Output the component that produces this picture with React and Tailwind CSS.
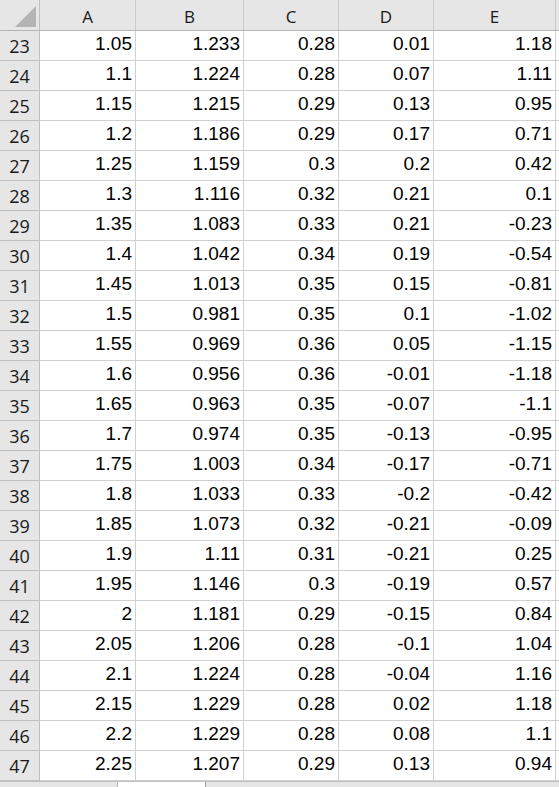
import React from "react";

const rows = [
  [23, "1.05", "1.233", "0.28", "0.01", "1.18"],
  [24, "1.1", "1.224", "0.28", "0.07", "1.11"],
  [25, "1.15", "1.215", "0.29", "0.13", "0.95"],
  [26, "1.2", "1.186", "0.29", "0.17", "0.71"],
  [27, "1.25", "1.159", "0.3", "0.2", "0.42"],
  [28, "1.3", "1.116", "0.32", "0.21", "0.1"],
  [29, "1.35", "1.083", "0.33", "0.21", "-0.23"],
  [30, "1.4", "1.042", "0.34", "0.19", "-0.54"],
  [31, "1.45", "1.013", "0.35", "0.15", "-0.81"],
  [32, "1.5", "0.981", "0.35", "0.1", "-1.02"],
  [33, "1.55", "0.969", "0.36", "0.05", "-1.15"],
  [34, "1.6", "0.956", "0.36", "-0.01", "-1.18"],
  [35, "1.65", "0.963", "0.35", "-0.07", "-1.1"],
  [36, "1.7", "0.974", "0.35", "-0.13", "-0.95"],
  [37, "1.75", "1.003", "0.34", "-0.17", "-0.71"],
  [38, "1.8", "1.033", "0.33", "-0.2", "-0.42"],
  [39, "1.85", "1.073", "0.32", "-0.21", "-0.09"],
  [40, "1.9", "1.11", "0.31", "-0.21", "0.25"],
  [41, "1.95", "1.146", "0.3", "-0.19", "0.57"],
  [42, "2", "1.181", "0.29", "-0.15", "0.84"],
  [43, "2.05", "1.206", "0.28", "-0.1", "1.04"],
  [44, "2.1", "1.224", "0.28", "-0.04", "1.16"],
  [45, "2.15", "1.229", "0.28", "0.02", "1.18"],
  [46, "2.2", "1.229", "0.28", "0.08", "1.1"],
  [47, "2.25", "1.207", "0.29", "0.13", "0.94"],
];

const colW = ["w-[96px]", "w-[108px]", "w-[95px]", "w-[95px]", "w-[122px]"];
const letters = ["A", "B", "C", "D", "E"];

export default function App() {
  return (
    <div className="w-[559px] h-[787px] overflow-hidden bg-white flex flex-col">
      {/* header */}
      <div className="flex h-[31px] shrink-0 bg-[#e6e6e6] border-b border-[#b5b5b5]">
        <div className="w-[40px] shrink-0 border-r border-[#c0c0c0] relative">
          <svg className="absolute left-0 top-0" width="39" height="30" viewBox="0 0 39 30">
            <polygon points="15,27 36,27 36,6" fill="#b4b4b4" />
          </svg>
        </div>
        {letters.map((l, i) => (
          <div
            key={l}
            className={`${colW[i]} shrink-0 border-r border-[#cccccc] flex items-end justify-center pb-[2px] text-[17px] leading-[22px] text-[#1a1a1a] font-['Open_Sans',sans-serif]`}
          >
            {l}
          </div>
        ))}
        <div className="flex-1" />
      </div>
      {/* rows */}
      {rows.map((r) => (
        <div key={r[0]} className="flex h-[30px] shrink-0">
          <div className="w-[40px] shrink-0 bg-[#e6e6e6] border-r border-b border-[#c0c0c0] flex items-end justify-center pb-[2px] text-[18px] leading-[24px] text-[#1a1a1a] font-['Open_Sans',sans-serif]">
            {r[0]}
          </div>
          {r.slice(1).map((v, i) => (
            <div
              key={i}
              className={`${colW[i]} shrink-0 border-r border-b border-[#d0d0d0] flex items-center justify-end pr-[3px] pb-[3px] text-[19px] leading-[22px] text-black font-['Liberation_Sans',Arial,sans-serif]`}
            >
              {v}
            </div>
          ))}
          <div className="flex-1 border-b border-[#d0d0d0]" />
        </div>
      ))}
      {/* bottom bar */}
      <div className="flex-1 flex bg-[#e6e6e6] border-t border-[#c0c0c0]">
        <div className="w-[118px] shrink-0 border-r border-[#b5b5b5]" />
        <div className="w-[88px] shrink-0 bg-white border-r border-[#9e9e9e]" />
        <div className="flex-1" />
      </div>
    </div>
  );
}
